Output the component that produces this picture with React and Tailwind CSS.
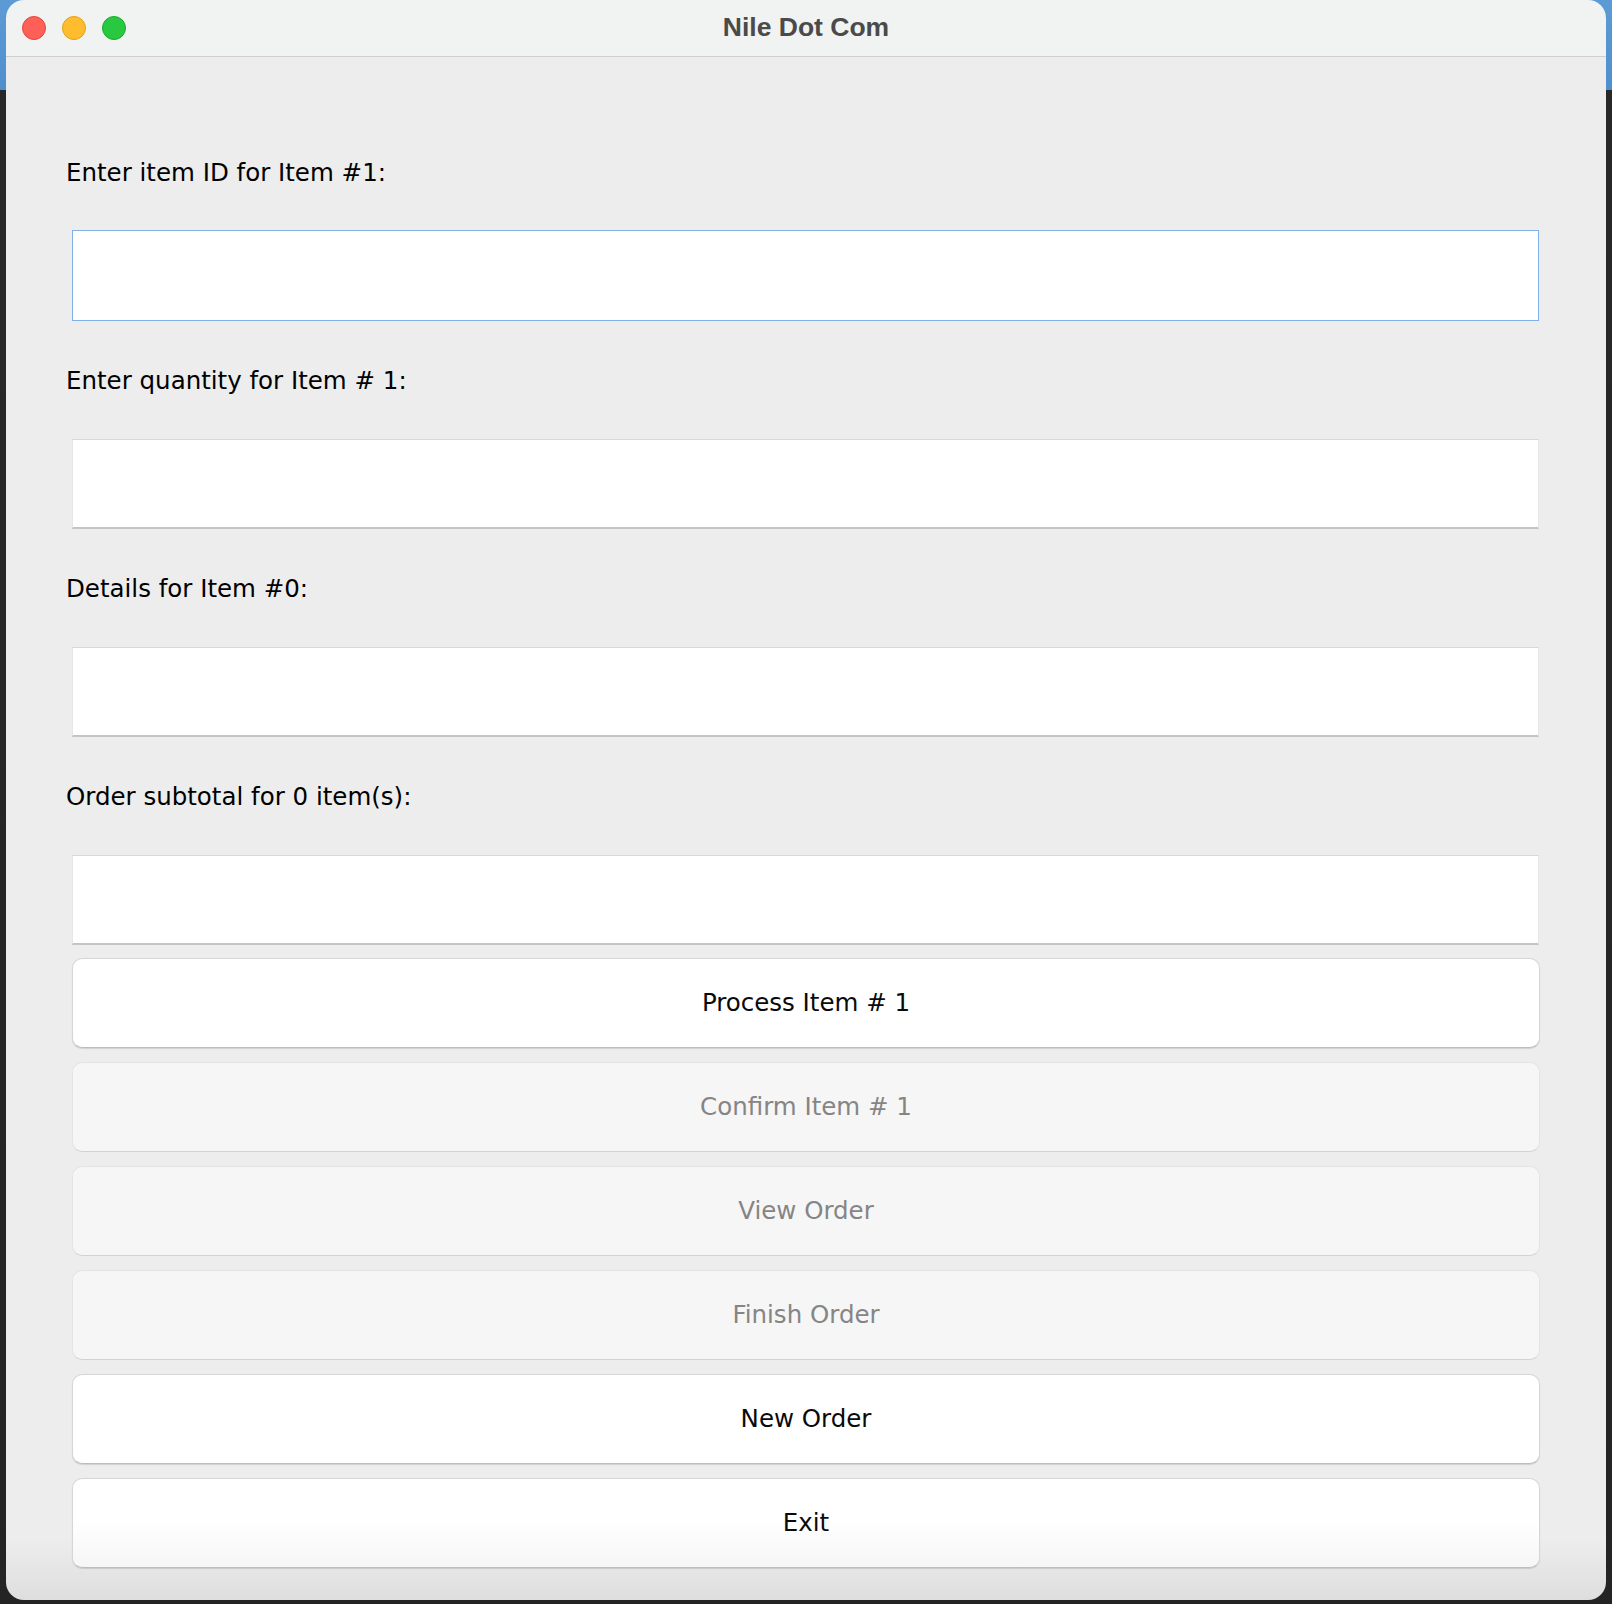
import React from "react";

const fields = [
  { label: "Enter item ID for Item #1:", focused: true },
  { label: "Enter quantity for Item # 1:" },
  { label: "Details for Item #0:" },
  { label: "Order subtotal for 0 item(s):" },
];

const buttons = [
  { text: "Process Item # 1", enabled: true },
  { text: "Confirm Item # 1" },
  { text: "View Order" },
  { text: "Finish Order" },
  { text: "New Order", enabled: true },
  { text: "Exit", enabled: true, last: true },
];

function Field({ label, focused }) {
  return (
    <>
      <div className="h-[104px] flex items-center pl-[60px] pt-[5px] text-[24.5px] text-black">
        {label}
      </div>
      <div className="h-[104px] flex items-center pl-[66px] pr-[67px] pt-[1px]">
        <input
          readOnly
          className={
            focused
              ? "w-full h-[91px] bg-white outline-none border-[1.5px] border-[#80b1ea]"
              : "w-full h-[90px] bg-white outline-none border border-[#e6e6e6] border-t-[#d8d8d8] border-b-2 border-b-[#c4c4c4]"
          }
        />
      </div>
    </>
  );
}

function Button({ text, enabled, last }) {
  return (
    <div className="h-[104px] flex items-center px-[66px]">
      <button
        className={
          enabled
            ? `w-full h-[90px] rounded-[10px] border border-[#d6d6d6] border-b-[#bdbdbd] shadow-[0_1px_1px_rgba(0,0,0,0.12)] text-[24.5px] text-[#0a0a0a] ${
                last ? "bg-[linear-gradient(to_bottom,#ffffff_45%,#f6f6f6)]" : "bg-white"
              }`
            : "w-full h-[90px] rounded-[10px] border border-[#e4e4e4] border-b-[#d2d2d2] bg-[#f6f6f6] text-[24.5px] text-[#858585]"
        }
      >
        {text}
      </button>
    </div>
  );
}

export default function App() {
  return (
    <div className="w-[1612px] h-[1604px] px-[6px] pb-[4px] bg-[linear-gradient(to_bottom,#5d9bd6_0px,#4f8fcd_90px,#282828_90px,#242424)] font-['DejaVu_Sans',sans-serif]">
      <div className="h-full rounded-[18px] overflow-hidden flex flex-col">
        {/* Title bar */}
        <div className="h-[57px] shrink-0 grid grid-cols-[1fr_auto_1fr] items-center bg-[#f1f2f2] border-b border-[#cfcfcf]">
          <div className="flex items-center gap-[16px] pl-[16px]">
            <span className="w-[24px] h-[24px] rounded-full bg-[#fe5f57] border border-[#e2463f]" />
            <span className="w-[24px] h-[24px] rounded-full bg-[#febc2e] border border-[#e1a116]" />
            <span className="w-[24px] h-[24px] rounded-full bg-[#28c840] border border-[#1aab29]" />
          </div>
          <div className="font-['Liberation_Sans',sans-serif] font-bold text-[26.5px] text-[#4a4a4a]">
            Nile Dot Com
          </div>
          <div />
        </div>

        {/* Content */}
        <div className="flex-1 flex flex-col pt-[62px] bg-[linear-gradient(to_bottom,#ededed_96%,#dedede)]">
          {fields.map((f) => (
            <Field key={f.label} {...f} />
          ))}
          {buttons.map((b) => (
            <Button key={b.text} {...b} />
          ))}
        </div>
      </div>
    </div>
  );
}
